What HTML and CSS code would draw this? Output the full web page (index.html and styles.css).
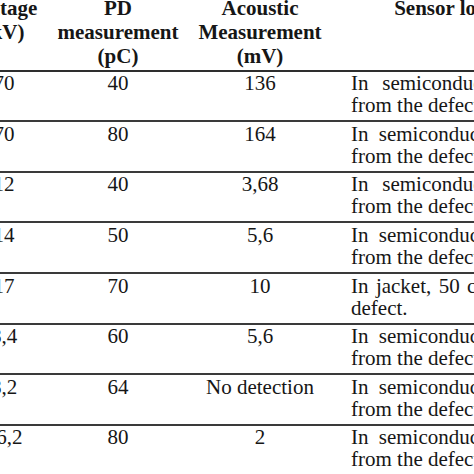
FILE: index.html
```html
<!DOCTYPE html>
<html lang="en">
<head>
<meta charset="utf-8">
<title>PD and acoustic measurements</title>
<link rel="stylesheet" href="styles.css">
</head>
<body>
<table class="data">
  <thead>
    <tr>
      <th class="c1">Voltage (kV)</th>
      <th class="c2">PD measurement (pC)</th>
      <th class="c3">Acoustic Measurement (mV)</th>
      <th class="c4">Sensor location</th>
    </tr>
  </thead>
  <tbody>
    <tr><td>70</td><td>40</td><td>136</td><td class="loc">In semiconductor, 5 cm from the defect.</td></tr>
    <tr><td>70</td><td>80</td><td>164</td><td class="loc">In semiconductor, 10 cm from the defect.</td></tr>
    <tr><td>12</td><td>40</td><td>3,68</td><td class="loc">In semiconductor, 5 cm from the defect.</td></tr>
    <tr><td>14</td><td>50</td><td>5,6</td><td class="loc">In semiconductor, 10 cm from the defect.</td></tr>
    <tr><td>17</td><td>70</td><td>10</td><td class="loc">In jacket, 50 cm from the defect.</td></tr>
    <tr><td>8,4</td><td>60</td><td>5,6</td><td class="loc">In semiconductor, 10 cm from the defect.</td></tr>
    <tr><td>8,2</td><td>64</td><td>No detection</td><td class="loc">In semiconductor, 10 cm from the defect.</td></tr>
    <tr><td>16,2</td><td>80</td><td>2</td><td class="loc">In semiconductor, 10 cm from the defect.</td></tr>
  </tbody>
</table>
</body>
</html>
```
FILE: styles.css
```css
html, body {
  margin: 0;
  padding: 0;
  background: #ffffff;
  overflow: hidden;
}

body {
  width: 474px;
  height: 474px;
  font-family: "Liberation Serif", "Times New Roman", serif;
  color: #161616;
}

.data {
  border-collapse: collapse;
  table-layout: fixed;
  width: 621px;
  margin: -3.6px 0 0 -37px;
  font-size: 21px;
}

.data th,
.data td {
  box-sizing: border-box;
  padding: 0;
  vertical-align: top;
  text-align: center;
}

.data th {
  font-weight: bold;
  line-height: 24px;
  padding-bottom: 1.3px;
  border-bottom: 2px solid #2e2e2e;
}

.data td {
  font-weight: normal;
  line-height: 22px;
  padding-top: 0.5px;
  padding-bottom: 4.1px;
  border-bottom: 2px solid #3a3a3a;
}

.data .c1 { width: 82px; }
.data .c2 { width: 146px; }
.data .c3 { width: 138px; }
.data .c4 {
  width: 255px;
  padding-left: 22px;
  padding-right: 10px;
}

.data td.loc {
  text-align: justify;
  padding-left: 22px;
  padding-right: 10px;
}
```
